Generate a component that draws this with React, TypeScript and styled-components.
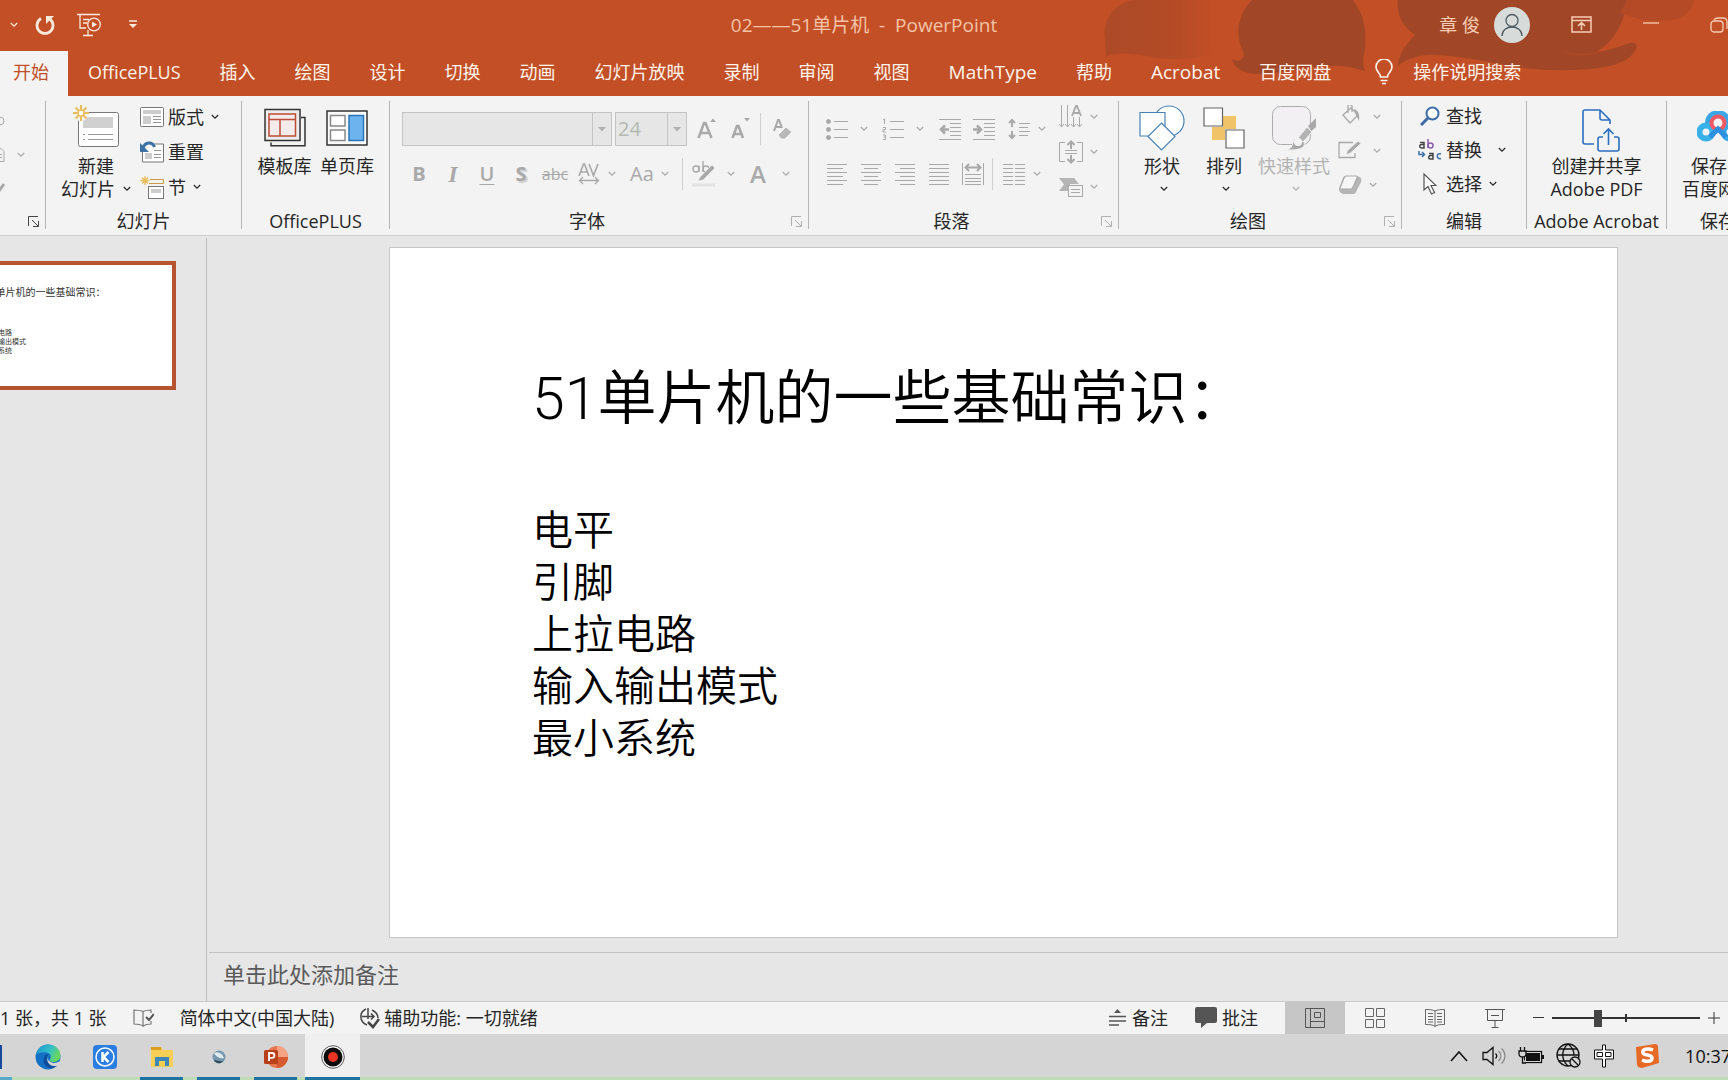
import React from "react";
import styled, { createGlobalStyle, css } from "styled-components";

const FONT = `"Open Sans", "Noto Sans CJK SC", sans-serif`;
const BRAND = "#c24f26";
const GREY = "#a9a9a9";
const INK = "#262626";

const Global = createGlobalStyle`
  * { box-sizing: border-box; }
  body { margin: 0; font-family: ${FONT}; color: ${INK}; background: #e6e6e6; }
  button, select, input, textarea { font: inherit; color: inherit; }
  svg { display: block; flex: none; }
`;

const bare = css`
  border: 0;
  padding: 0;
  margin: 0;
  background: none;
  cursor: default;
`;

const Window = styled.div`
  display: flex;
  flex-direction: column;
  height: 100vh;
  overflow: hidden;
  font-size: 18px;
  line-height: 22px;
`;

/* ---------- title bar and tabs ---------- */

const Header = styled.header`
  position: relative;
  flex: none;
  background: ${BRAND};
  color: #fbe9dc;
`;

const Swirl = styled.svg`
  position: absolute;
  top: 0;
  right: 0;
`;

const TitleBar = styled.div`
  position: relative;
  display: grid;
  grid-template-columns: 1fr auto 1fr;
  align-items: center;
  height: 51px;
  padding-bottom: 2px;
`;

const QuickAccess = styled.div`
  display: flex;
  align-items: center;
  padding-left: 9px;
`;

const DocTitle = styled.h1`
  margin: 0;
  font-size: 19px;
  font-weight: 400;
  white-space: pre;
  color: #f5c3a6;
`;

const WindowControls = styled.div`
  display: flex;
  align-items: center;
  justify-content: flex-end;
  color: #f8cdb4;
`;

const BarButton = styled.button<{ $w: number }>`
  ${bare}
  display: flex;
  align-items: center;
  justify-content: center;
  width: ${(p) => p.$w}px;
  height: 36px;
`;

const UserButton = styled.button`
  ${bare}
  display: flex;
  align-items: center;
  gap: 14px;
  margin-right: 30px;
`;

const TabBar = styled.nav`
  position: relative;
  display: flex;
  height: 45px;
`;

const Tab = styled.button<{ $active?: boolean; $large?: boolean }>`
  ${bare}
  flex: none;
  padding: 0 19px 4px ${(p) => (p.$active ? 13 : 20)}px;
  white-space: nowrap;
  font-size: ${(p) => (p.$large ? 19 : 18)}px;
  color: ${(p) => (p.$active ? BRAND : "#fff3ea")};
  background: ${(p) => (p.$active ? "#f3f3f3" : "transparent")};
`;

const TellMe = styled.button`
  ${bare}
  display: flex;
  align-items: center;
  gap: 19px;
  padding: 0 0 4px 24px;
  color: #fff3ea;
`;

/* ---------- ribbon ---------- */

const Ribbon = styled.div`
  display: flex;
  flex: none;
  height: 140px;
  overflow: hidden;
  background: #f3f3f3;
  border-bottom: 1px solid #cdcdcd;
`;

const GroupBox = styled.section<{ $w: number }>`
  display: flex;
  flex-direction: column;
  flex: none;
  width: ${(p) => p.$w}px;
`;

const GroupBody = styled.div<{ $left: number; $center?: boolean }>`
  display: flex;
  height: 111px;
  padding-left: ${(p) => p.$left}px;
  justify-content: ${(p) => (p.$center ? "center" : "flex-start")};
`;

const GroupFoot = styled.div`
  display: flex;
  align-items: center;
  height: 28px;
  white-space: nowrap;
`;

const FootLabel = styled.span`
  flex: 1;
  padding-bottom: 1px;
  text-align: center;
`;

const Launcher = styled.button<{ $dark: boolean }>`
  ${bare}
  margin: 0 6px 0 7px;
  color: ${(p) => (p.$dark ? "#444" : "#b0b0b0")};
`;

const Split = styled.i`
  flex: none;
  width: 1px;
  margin: 5px 0 6px;
  background: #b5b5b5;
`;

const BigButton = styled.button<{ $w?: number; $dim?: boolean }>`
  ${bare}
  display: flex;
  flex-direction: column;
  align-items: center;
  width: ${(p) => (p.$w ? `${p.$w}px` : "auto")};
  padding-top: 8px;
  white-space: nowrap;
  color: ${(p) => (p.$dim ? "#b3b3b3" : INK)};
`;

const BigIcon = styled.span`
  display: flex;
  align-items: center;
  justify-content: center;
  height: 48px;
  margin-bottom: 2px;
`;

const Line = styled.span<{ $drop?: boolean }>`
  display: flex;
  align-items: center;
  gap: 8px;
  height: 23px;
  padding-left: ${(p) => (p.$drop ? 4 : 0)}px;
`;

const Stack = styled.div<{ $left?: number; $top?: number; $gap?: number }>`
  display: flex;
  flex-direction: column;
  gap: ${(p) => p.$gap ?? 0}px;
  padding-top: ${(p) => p.$top ?? 4}px;
  padding-left: ${(p) => p.$left ?? 0}px;
`;

const SmallButton = styled.button<{ $gap?: number }>`
  ${bare}
  display: flex;
  align-items: center;
  height: 34px;
  white-space: nowrap;
  > span { margin: 0 ${(p) => p.$gap ?? 7}px 0 4px; }
`;

const SmallIcon = styled.i`
  display: flex;
  justify-content: center;
  width: 24px;
`;

const Rows = styled.div<{ $w?: number }>`
  display: flex;
  flex-direction: column;
  gap: 11px;
  width: ${(p) => (p.$w ? `${p.$w}px` : "auto")};
  padding-top: 16px;
`;

const Row = styled.div`
  display: flex;
  align-items: center;
  height: 34px;
`;

const ToolButton = styled.button<{ $gap?: number }>`
  ${bare}
  display: flex;
  align-items: center;
  height: 34px;
  margin-left: ${(p) => p.$gap ?? 0}px;
  color: ${GREY};
`;

const Slot = styled.i<{ $w: number }>`
  display: flex;
  align-items: center;
  justify-content: center;
  width: ${(p) => p.$w}px;
  font-style: normal;
`;

const Glyph = styled.span<{ $kind?: "b" | "i" | "u" | "s" | "strike" | "case" | "color" }>`
  font-size: 20px;
  font-weight: 700;
  ${(p) => p.$kind === "i" && `font-family: "Liberation Serif", serif; font-style: italic; font-size: 24px;`}
  ${(p) => p.$kind === "u" && `font-weight: 600; text-decoration: underline; text-underline-offset: 3px; text-decoration-thickness: 1px;`}
  ${(p) => p.$kind === "s" && `text-shadow: 2px 2px 1px #cfcfcf;`}
  ${(p) => p.$kind === "strike" && `font-size: 16px; font-weight: 400; text-decoration: line-through;`}
  ${(p) => p.$kind === "case" && `font-weight: 400;`}
  ${(p) => p.$kind === "color" && `font-weight: 600; font-size: 24px;`}
`;

const Rule = styled.i<{ $l: number; $r: number }>`
  width: 1px;
  height: 32px;
  margin: 0 ${(p) => p.$r}px 0 ${(p) => p.$l}px;
  background: #cfcfcf;
`;

const Combo = styled.label<{ $w: number }>`
  display: grid;
  width: ${(p) => p.$w}px;
  height: 34px;
  margin-right: 3px;
  border: 1px solid #c4c4c4;
  background: #e6e6e6;
  select {
    grid-area: 1 / 1;
    appearance: none;
    border: 0;
    padding: 0 22px 0 2px;
    background: none;
    font-size: 20px;
    color: #b4b9b4;
    opacity: 1;
  }
`;

const ComboArrow = styled.i`
  display: flex;
  grid-area: 1 / 1;
  justify-self: end;
  align-items: center;
  justify-content: center;
  width: 19px;
  border-left: 1px solid #c4c4c4;
  pointer-events: none;
`;

/* ---------- workspace ---------- */

const Workspace = styled.main`
  display: flex;
  flex: 1;
  min-height: 0;
`;

const ThumbPanel = styled.aside`
  flex: none;
  width: 207px;
  margin-top: 2px;
  padding-top: 23px;
  overflow: hidden;
  border-right: 1px solid #bdbdbd;
`;

const Thumb = styled.button`
  ${bare}
  display: flex;
  flex-direction: column;
  justify-content: flex-start;
  width: 223px;
  height: 129px;
  margin-left: -47px;
  padding: 22px 0 0 27px;
  border: 4px solid #b65331;
  background: #fff;
  text-align: left;
  color: #333;
`;

const ThumbTitle = styled.span`
  height: 23px;
  font-size: 10px;
  line-height: 10px;
  white-space: nowrap;
`;

const ThumbLine = styled.span`
  font-size: 7px;
  line-height: 9px;
`;

const Editor = styled.div`
  display: flex;
  flex: 1;
  flex-direction: column;
  min-width: 0;
`;

const Stage = styled.div`
  flex: 1;
  min-height: 0;
  padding: 11px 110px 0 182px;
  overflow: hidden;
`;

const Slide = styled.article`
  aspect-ratio: 16 / 9;
  padding: 109px 142px;
  border: 1px solid #c6c6c6;
  background: #fff;
  color: #000;
  font-family: Roboto, "Noto Sans CJK SC", sans-serif;
  font-weight: 350;
`;

const SlideTitle = styled.h2`
  margin: 0 0 64px;
  font-size: 59px;
  font-weight: inherit;
  line-height: 84px;
  white-space: nowrap;
`;

const SlideLine = styled.p`
  margin: 0;
  font-size: 41px;
  line-height: 52px;
`;

const Notes = styled.input`
  flex: none;
  height: 49px;
  margin-left: 2px;
  padding: 0 14px 6px;
  border: 0;
  border-top: 1px solid #c4c4c4;
  background: none;
  font-size: 22px;
  outline: none;
  &::placeholder { color: #5a5a5a; opacity: 1; }
`;

/* ---------- status bar ---------- */

const StatusBar = styled.footer`
  display: flex;
  flex: none;
  align-items: center;
  justify-content: space-between;
  height: 33px;
  border-top: 1px solid #c9c9c9;
  background: #f3f3f3;
  white-space: nowrap;
`;

const StatusSide = styled.div<{ $gap: number }>`
  display: flex;
  align-items: center;
  gap: ${(p) => p.$gap}px;
`;

const StatusButton = styled.button`
  ${bare}
  display: flex;
  align-items: center;
  gap: 4px;
  height: 32px;
  padding-bottom: 1px;
`;

const Views = styled.div`
  display: flex;
`;

const ViewButton = styled.button<{ $on?: boolean }>`
  ${bare}
  display: flex;
  align-items: center;
  justify-content: center;
  width: 60px;
  height: 32px;
  background: ${(p) => (p.$on ? "#c6c6c6" : "none")};
`;

const ZoomBox = styled.div`
  display: flex;
  align-items: center;
  gap: 8px;
  padding: 0 8px;
`;

const ZoomSlider = styled.input`
  appearance: none;
  width: 148px;
  height: 18px;
  margin: 0;
  background:
    linear-gradient(#333, #333) center / 148px 2px no-repeat,
    linear-gradient(#333, #333) center / 2px 8px no-repeat;
  &::-webkit-slider-thumb {
    appearance: none;
    width: 8px;
    height: 17px;
    background: #444;
  }
`;

/* ---------- taskbar ---------- */

const Taskbar = styled.div`
  display: flex;
  flex: none;
  justify-content: space-between;
  height: 46px;
  border-bottom: 3px solid #bfdcb6;
  background: #d5d5d5;
`;

const Apps = styled.div`
  display: flex;
  gap: 14px;
`;

const AppButton = styled.button<{ $line?: string }>`
  ${bare}
  display: flex;
  align-items: center;
  justify-content: center;
  width: 43px;
  height: 46px;
  padding-top: 2px;
  border-bottom: 3px solid ${(p) => p.$line ?? "#bfdcb6"};
`;

const EdgeAppButton = styled(AppButton)`
  justify-content: flex-start;
  width: 12px;
`;

const OpenAppButton = styled(AppButton)`
  width: 55px;
  margin-left: -6px;
  background: #f0f0f0;
`;

const Tray = styled.div`
  display: flex;
  align-items: center;
  gap: 12px;
  margin-right: -3px;
  color: #111;
`;

const InputMethod = styled.span`
  padding-left: 8px;
`;

const Clock = styled.time`
  padding-left: 14px;
`;

/* ---------- small drawing helpers ---------- */

type IconProps = { w: number; h: number; children: React.ReactNode; sw?: number; box?: string };
const Icon = ({ w, h, children, sw = 1, box }: IconProps) => (
  <svg width={w} height={h} viewBox={box ?? `0 0 ${w} ${h}`} fill="none" stroke="currentColor" strokeWidth={sw} aria-hidden="true">
    {children}
  </svg>
);

const Chevron = () => (
  <Icon w={8} h={6} sw={1.2}><path d="M.8 1 4 4.2 7.2 1" /></Icon>
);

const Hairlines = ({ rows }: { rows: [number, number][] }) => (
  <Icon w={22} h={22}>
    {rows.map(([a, b], i) => <path key={i} d={`M${a} ${i * 4 + 1.5}H${b}`} />)}
  </Icon>
);

type ToolProps = { label: string; gap?: number; chev?: number; children: React.ReactNode };
const Tool = ({ label, gap, chev, children }: ToolProps) => (
  <ToolButton aria-label={label} $gap={gap}>
    <Slot $w={34}>{children}</Slot>
    {chev ? <Slot $w={chev}><Chevron /></Slot> : null}
  </ToolButton>
);

type GroupProps = { w: number; label?: string; left?: number; center?: boolean; launcher?: "dark" | "light"; children: React.ReactNode };
const Group = ({ w, label, left = 0, center, launcher, children }: GroupProps) => (
  <GroupBox $w={w}>
    <GroupBody $left={left} $center={center}>{children}</GroupBody>
    <GroupFoot>
      <FootLabel>{label}</FootLabel>
      {launcher && (
        <Launcher $dark={launcher === "dark"} aria-label={`${label ?? "剪贴板"}选项`}>
          <Icon w={11} h={11}><path d="M.5 10V.5H10M4 4l6 6M10.500 5v5.500H5" /></Icon>
        </Launcher>
      )}
    </GroupFoot>
  </GroupBox>
);

/* ---------- icons ---------- */

const NewSlideIcon = () => (
  <Icon w={48} h={46}>
    <rect x="6.500" y="7.500" width="40" height="34" rx="2" fill="#fff" stroke="#777" />
    <path d="M11 12h30v11H11z" fill="#d0d0d0" stroke="none" />
    <path d="M11 29.500h2M16 29.500h25M11 34.500h2M16 34.500h25" stroke="#999" />
    <circle cx="9" cy="8" r="8" fill="#f3f3f3" stroke="none" />
    <g stroke="#e9bd5c" strokeWidth="2"><path d="M9 0v5M9 11v5M1 8h5M12 8h5M3.500 2.500l3.300 3.300M11.200 10.200l3.300 3.300M14.500 2.500l-3.300 3.300M6.800 10.200l-3.300 3.300" /><circle cx="9" cy="8" r="3" fill="#fff" strokeWidth="1.500" /></g>
  </Icon>
);
const LayoutIcon = () => (
  <Icon w={24} h={20}>
    <rect x=".5" y=".5" width="23" height="19" rx="1" fill="#fff" stroke="#777" />
    <path d="M3 3h18v4H3zM3 9h8v8H3z" fill="#cdcdcd" stroke="none" />
    <path d="M13 9.500h8M13 12.500h8M13 15.500h8" stroke="#999" />
  </Icon>
);
const ResetIcon = () => (
  <Icon w={24} h={22}>
    <path d="M2.500 11v10h21v-18H14" fill="#fff" stroke="#777" />
    <path d="M5 12h7v6H5z" fill="#cdcdcd" stroke="none" />
    <path d="M14 9.500h7M14 13.500h7M14 16.500h7" stroke="#999" />
    <path d="M3 7C5 1 12 0 14.500 6" stroke="#3d72a4" strokeWidth="3" /><path d="M0 2v9h9z" fill="#3d72a4" stroke="none" />
  </Icon>
);
const SectionIcon = () => (
  <Icon w={24} h={24}>
    <path d="M10 4.500h13.500v4H9" stroke="#c99a45" />
    <path d="M5 1v9M.5 5.500h9M2 2.500l6 6M8 2.500l-6 6" stroke="#e9bd5c" strokeWidth="1.300" />
    <rect x="8.500" y="11.500" width="15" height="12" fill="#fff" stroke="#777" /><path d="M11 14h10v4H11z" fill="#cdcdcd" stroke="none" />
  </Icon>
);
const TemplatesIcon = () => (
  <Icon w={42} h={40} sw={1.500}>
    <path d="M7 34.500v3.300h34V9.500h-4" stroke="#333" /><rect x="1" y="1.500" width="35" height="31" fill="#ececec" stroke="#333" />
    <rect x="5" y="6" width="26.500" height="22" fill="#f3ecea" stroke="#bd4b38" /><path d="M5 11.500h26.500M16 11.500V28" stroke="#bd4b38" />
  </Icon>
);
const PagesIcon = () => (
  <Icon w={42} h={38} sw={1.500}>
    <rect x="1" y="2" width="40" height="34" fill="#fafafa" stroke="#333" />
    <rect x="4.500" y="6.500" width="14.500" height="10.500" fill="#fff" stroke="#888" /><rect x="4.500" y="21" width="14.500" height="10.500" fill="#fff" stroke="#888" />
    <rect x="23" y="6.500" width="14.500" height="25" fill="#6db4ee" stroke="#2874b8" />
  </Icon>
);
const ShapesIcon = () => (
  <Icon w={46} h={46} sw={1.200}>
    <circle cx="30" cy="16" r="15" fill="#fff" stroke="#4a83b3" /><path d="M1 7.500h25V31H1z" fill="#fff" stroke="#4a83b3" />
    <path d="m22.500 18 13.500 13.500-13.500 13.500L9 31.500z" fill="#fff" stroke="#4a83b3" />
  </Icon>
);
const ArrangeIcon = () => (
  <Icon w={42} h={42} sw={1.200}>
    <path d="M20 9h13v13H20zM9 20h13v13H9z" fill="#f0c368" stroke="none" />
    <path d="M1 1h18.500v18H1zM23 23h18v18H23z" fill="#fff" stroke="#666" />
  </Icon>
);
const StyleIcon = () => (
  <Icon w={46} h={46}>
    <rect x="1.500" y="1.500" width="38" height="38" rx="8" fill="#f3f0f4" stroke="#adadad" />
    <path d="M12 45c8 0 9-3 10-8 1-4 7-5 10-2 3 4 1 8-4 9-5 1.500-10 1-16 1z" fill="#a9a9a9" stroke="#f3f3f3" />
    <path d="M27 33 36 22l5 5-9 10z" fill="#b3b3b3" stroke="#f3f3f3" /><path d="m37 21 8-8v9l-4.500 4z" fill="#a9a9a9" stroke="none" />
    <circle cx="27" cy="37" r="4" fill="#f3f3f3" stroke="none" />
  </Icon>
);
const PdfIcon = () => (
  <Icon w={50} h={48} sw={1.600} box="-10 -4 50 48">
    <path d="M13 36H4a2 2 0 0 1-2-2V4a2 2 0 0 1 2-2h15l10 10v4M19 2v8a2 2 0 0 0 2 2h8" stroke="#2b6fc0" />
    <path d="M22 29h-3a2 2 0 0 0-2 2v10a2 2 0 0 0 2 2h17a2 2 0 0 0 2-2V31a2 2 0 0 0-2-2h-3M27.500 37V21M22.500 26l5-5 5 5" stroke="#2b6fc0" />
  </Icon>
);
const NetdiskIcon = () => (
  <Icon w={42} h={34} sw={6}>
    <circle cx="9" cy="21" r="6.500" stroke="#38b0e8" /><circle cx="33" cy="21" r="6.500" stroke="#38a8e8" />
    <path d="M10.500 12a10.500 10.500 0 0 1 21 0" stroke="#3aa6e8" strokeWidth="5" /><circle cx="21" cy="12" r="6.500" stroke="#ee5a63" strokeWidth="4" />
    <path d="m13 26 8-8 8 8" stroke="#2d8fe0" strokeWidth="5" />
  </Icon>
);

/* ---------- sections ---------- */

const HeaderArt = () => (
  <Swirl width="628" height="96" viewBox="0 0 628 96" aria-hidden="true">
    <defs>
      <linearGradient id="fadeRight" x1="0" x2="1" y1="0" y2="0">
        <stop offset="0" stopColor="#ad4a27" /><stop offset=".6" stopColor="#b24b26" /><stop offset="1" stopColor={BRAND} />
      </linearGradient>
    </defs>
    <path d="M22 4C8 12 2 26 5 40l1 17c10-5 26-4 46 0 24 4 46 2 60-4V0H34c-4 0-8 2-12 4z" fill="url(#fadeRight)" />
    <path d="M152 0c-14 14-18 34-8 54-2 8-6 8-12 5 2 10 14 16 30 15 26-1 42-8 68-8 14-1 24 2 35 5-3-8-2-14 0-22 2-20-2-36-12-49z" fill="#a14727" />
    <path d="M298 0c-2 14 4 26 17 35-8 8-16 18-17 31 10-8 22-12 40-11 40 2 70 14 112 15 44 1 78-3 86-21 2-5-1-7-6-6-10 3-18 7-34 9 18-10 28-28 31-52z" fill="#a14727" />
    <path d="M520 12c14 8 34 10 52 8 14-2 20-10 22-20h-66z" fill="#b44b26" />
    <path d="M464 52c14 4 26 3 38-1" stroke="#b24b26" fill="none" />
  </Swirl>
);

const tabs: { name: string; large?: boolean }[] = [
  { name: "OfficePLUS" },
  { name: "插入" },
  { name: "绘图" },
  { name: "设计" },
  { name: "切换" },
  { name: "动画" },
  { name: "幻灯片放映" },
  { name: "录制" },
  { name: "审阅" },
  { name: "视图" },
  { name: "MathType", large: true },
  { name: "帮助" },
  { name: "Acrobat", large: true },
  { name: "百度网盘" },
];

const Top = () => (
  <Header>
    <HeaderArt />
    <TitleBar>
      <QuickAccess>
        <BarButton $w={10} aria-label="撤消选项"><Chevron /></BarButton>
        <BarButton $w={52} aria-label="重复">
          <Icon w={20} h={22} sw={2.800}><path d="M6 4.500A8 8 0 1 0 14 4.500" /><path d="M19 2h-8v8z" fill="currentColor" stroke="none" /></Icon>
        </BarButton>
        <BarButton $w={36} aria-label="从头开始">
          <Icon w={24} h={24} sw={1.300}><path d="M0 1.500h23M3 2v13h6M6 6.500h6M6 10h4M11 17v5M6 22.500h10" /><circle cx="17" cy="11.500" r="6.300" /><path d="M15 8.500v6l5-3z" fill="currentColor" stroke="none" /></Icon>
        </BarButton>
        <BarButton $w={52} aria-label="自定义快速访问工具栏">
          <Icon w={8} h={9} sw={1.500}><path d="M0 1h8" /><path d="M0 4h8L4 8z" fill="currentColor" stroke="none" /></Icon>
        </BarButton>
      </QuickAccess>
      <DocTitle>{"02——51单片机  -  PowerPoint"}</DocTitle>
      <WindowControls>
        <UserButton>
          <span>章 俊</span>
          <Icon w={36} h={36} sw={1.300}><circle cx="18" cy="18" r="18" fill="#d7dcdb" stroke="none" /><g stroke="#4d5a60"><circle cx="18" cy="13.500" r="6" /><path d="M8 29c0-12 20-12 20 0" /></g></Icon>
        </UserButton>
        <BarButton $w={42} aria-label="功能区显示选项">
          <Icon w={21} h={17} sw={1.500}><path d="M1 1h19v15H1zM1 4.500h19M10.500 14V7M7 10l3.500-3.500L14 10" /></Icon>
        </BarButton>
        <BarButton $w={108} aria-label="最小化"><Icon w={28} h={10} sw={1.300}><path d="M1 3h16" /></Icon></BarButton>
        <BarButton $w={18} aria-label="向下还原">
          <Icon w={18} h={16} sw={1.300}><rect x="1" y="4" width="12" height="11" rx="3" /><path d="M4 3c1-2 2-2 4-2h5c3 0 4 1 4 4v7" /></Icon>
        </BarButton>
      </WindowControls>
    </TitleBar>
    <TabBar>
      <Tab $active>开始</Tab>
      {tabs.map((t) => <Tab key={t.name} $large={t.large}>{t.name}</Tab>)}
      <TellMe>
        <Icon w={20} h={26} sw={1.600}><path d="M6.500 18c0-4-4.500-5-4.500-10a8 8 0 0 1 16 0c0 5-4.500 6-4.500 10zM6.500 21.500h7M8 24.500h4" /></Icon>
        操作说明搜索
      </TellMe>
    </TabBar>
  </Header>
);

const ClipboardGroup = () => (
  <Group w={45} launcher="dark">
    <Stack $top={8}>
      <ToolButton aria-label="剪切"><Icon w={6} h={12}><circle cx="0" cy="6" r="4" /></Icon></ToolButton>
      <ToolButton aria-label="复制"><Icon w={6} h={16}><path d="M-1 1.500h2l3 3v10h-5M-1 7.500h3M-1 10.500h3" /></Icon><Slot $w={30}><Chevron /></Slot></ToolButton>
      <ToolButton aria-label="格式刷"><Icon w={6} h={14} sw={3}><path d="m-1 9 5-7" /></Icon></ToolButton>
    </Stack>
  </Group>
);

const SlidesGroup = () => (
  <Group w={195} label="幻灯片" left={10}>
    <BigButton $w={80}>
      <BigIcon><NewSlideIcon /></BigIcon>
      <Line>新建</Line>
      <Line>幻灯片 <Chevron /></Line>
    </BigButton>
    <Stack $left={4} $gap={1}>
      <SmallButton><SmallIcon><LayoutIcon /></SmallIcon><span>版式</span><Chevron /></SmallButton>
      <SmallButton><SmallIcon><ResetIcon /></SmallIcon><span>重置</span></SmallButton>
      <SmallButton><SmallIcon><SectionIcon /></SmallIcon><span>节</span><Chevron /></SmallButton>
    </Stack>
  </Group>
);

const FontGroup = () => (
  <Group w={418} label="字体" left={12} launcher="light">
    <Rows>
      <Row>
        <Combo $w={210}>
          <select disabled aria-label="字体"><option /></select>
          <ComboArrow><Icon w={8} h={5}><path d="M0 0h8L4 4.500z" fill="#b0b0b0" stroke="none" /></Icon></ComboArrow>
        </Combo>
        <Combo $w={72}>
          <select disabled aria-label="字号"><option>24</option></select>
          <ComboArrow><Icon w={8} h={5}><path d="M0 0h8L4 4.500z" fill="#b0b0b0" stroke="none" /></Icon></ComboArrow>
        </Combo>
        <Tool label="增大字号"><Icon w={20} h={22} sw={2.600}><path d="m1.500 20 5.500-15h1.500l6 15M4 15h8.500" /><path d="m13 4 3-3.500L19 4z" fill="currentColor" stroke="none" /></Icon></Tool>
        <Tool label="减小字号"><Icon w={20} h={22} sw={2.600}><path d="M1.500 20 6 8h1.500L12 20M3.500 16h7" /><path d="m13 0 3 3.500L19 0z" fill="currentColor" stroke="none" /></Icon></Tool>
        <Rule $l={2} $r={5} />
        <Tool label="清除格式"><Icon w={20} h={22} sw={2}><path d="m1 13 4-11h1l3 8M3 9h5" /><path d="m5 17 8-8 6 5-7 7H8z" fill="#b9b9b9" stroke="#f3f3f3" strokeWidth="1" /></Icon></Tool>
      </Row>
      <Row>
        <Tool label="加粗"><Glyph>B</Glyph></Tool>
        <Tool label="倾斜"><Glyph $kind="i">I</Glyph></Tool>
        <Tool label="下划线"><Glyph $kind="u">U</Glyph></Tool>
        <Tool label="文字阴影"><Glyph $kind="s">S</Glyph></Tool>
        <Tool label="删除线"><Glyph $kind="strike">abc</Glyph></Tool>
        <Tool label="字符间距" chev={12}><Icon w={22} h={22} sw={1.700}><path d="m1 13 4.500-12h1L11 13M3 9h6.500M11 1l4.500 11.500L20 1" /><path d="M1.500 17.500h19M5 14l-3.500 3.500L5 21M17 14l3.500 3.500L17 21" strokeWidth="1.300" /></Icon></Tool>
        <Tool label="更改大小写" chev={12} gap={7}><Glyph $kind="case">Aa</Glyph></Tool>
        <Rule $l={11} $r={4} />
        <Tool label="突出显示颜色" chev={20}>
          <Icon w={24} h={26} sw={1.400}><circle cx="4" cy="8" r="3" /><path d="M7 4.500V11M11 0v11" /><circle cx="14" cy="8" r="3" /><path d="m20 4 3 3-12 12-5 1 2-4z" fill="currentColor" stroke="#f3f3f3" strokeWidth=".6" /><path d="M0 24h23" stroke="#e2e2e2" strokeWidth="3" /></Icon>
        </Tool>
        <Tool label="字体颜色" chev={22}><Glyph $kind="color">A</Glyph></Tool>
      </Row>
    </Rows>
  </Group>
);

const full: [number, number] = [1, 21];
const ParagraphGroup = () => (
  <Group w={309} label="段落" left={11} launcher="light">
    <Rows $w={234}>
      <Row>
        <Tool label="项目符号" chev={20}><Icon w={22} h={22}><path d="M8 3.500h14M8 11.500h14M8 19.500h14" /><g fill="currentColor"><circle cx="2.500" cy="3.500" r="2" /><circle cx="2.500" cy="11.500" r="2" /><circle cx="2.500" cy="19.500" r="2" /></g></Icon></Tool>
        <Tool label="编号" chev={20} gap={2}><Icon w={22} h={22}><path d="M8 3.500h14M8 11.500h14M8 19.500h14M1 2l1.500-1v5M1 9.500h2.500v2H1V14h3M1 17h2.500v4.500H1M1.500 19h2" /></Icon></Tool>
        <Tool label="减少缩进" gap={3}><Icon w={22} h={22}><path d="M0 1.500h22M11 5.500h11M11 9.500h11M11 13.500h11M11 17.500h11M0 21.500h22" /><path d="M10 11.500H2M6 7.500l-4 4 4 4" strokeWidth="2.500" /></Icon></Tool>
        <Tool label="增加缩进"><Icon w={22} h={22}><path d="M0 1.500h22M11 5.500h11M11 9.500h11M11 13.500h11M11 17.500h11M0 21.500h22" /><path d="M0 11.500h8M4 7.500l4 4-4 4" strokeWidth="2.500" /></Icon></Tool>
        <Tool label="行距" chev={12} gap={1}><Icon w={22} h={22}><path d="M11 5.500h11M11 9.500h9M11 13.500h11M11 17.500h9" /><path d="M4 9V2M1 5l3-3 3 3M4 13v7M1 17l3 3 3-3" strokeWidth="2" /></Icon></Tool>
      </Row>
      <Row>
        <Tool label="左对齐"><Hairlines rows={[full, [1, 17], full, [1, 17], full, [1, 17]]} /></Tool>
        <Tool label="居中"><Hairlines rows={[full, [4, 18], full, [4, 18], full, [4, 18]]} /></Tool>
        <Tool label="右对齐"><Hairlines rows={[full, [6, 21], full, [6, 21], full, [6, 21]]} /></Tool>
        <Tool label="两端对齐"><Hairlines rows={[full, full, full, full, full, full]} /></Tool>
        <Tool label="分散对齐"><Icon w={22} h={24}><path d="M.5 1v22M21.500 1v22M3 12.500h16M3 16.500h16M3 19.500h16M3 22.500h16" /><path d="M3 5.500h16M7 2 3.500 5.500 7 9M15 2l3.500 3.500L15 9" strokeWidth="2" /></Icon></Tool>
        <Rule $l={2} $r={4} />
        <Tool label="分栏" chev={12}><Icon w={22} h={22}>{[0, 1, 2, 3, 4, 5].map((i) => <path key={i} d={`M0 ${i * 4 + 1.5}h10M12 ${i * 4 + 1.5}h10`} />)}</Icon></Tool>
      </Row>
    </Rows>
    <Stack $gap={1}>
      <Tool label="文字方向" chev={12}><Icon w={24} h={24}><path d="M2.500 0v22M8.500 0v22M14.500 12v10M20.500 12v10M0 19l2.500 3L5 19M6 19l2.500 3 2.500-3M12 19l2.500 3 2.500-3M18 19l2.500 3 2.500-3" /><path d="m13 11 4-10h1l4 10M14.500 8h6" strokeWidth="1.800" /></Icon></Tool>
      <Tool label="对齐文本" chev={12}><Icon w={24} h={24}><path d="M6 2.500H.5v19H6M18 2.500h5.500v19H18M6 10.500h12M6 13.500h12" /><path d="M12 9V2M8.500 5 12 1.500 15.500 5M12 15v7M8.500 19l3.500 3.500 3.500-3.500" strokeWidth="2" /></Icon></Tool>
      <Tool label="转换为 SmartArt" chev={12}><Icon w={24} h={20}><path d="M0 1h15l5 6h-9v7H0l5-6.500z" fill="#b5b5b5" stroke="none" /><rect x="9.500" y="8.500" width="14" height="11" fill="#f3f3f3" /><path d="M12 12.500h9M12 15.500h9" /></Icon></Tool>
    </Stack>
  </Group>
);

const DrawingGroup = () => (
  <Group w={282} label="绘图" left={12} launcher="light">
    <BigButton $w={62}><BigIcon><ShapesIcon /></BigIcon><Line>形状</Line><Line $drop><Chevron /></Line></BigButton>
    <BigButton $w={62}><BigIcon><ArrangeIcon /></BigIcon><Line>排列</Line><Line $drop><Chevron /></Line></BigButton>
    <BigButton $w={78} $dim><BigIcon><StyleIcon /></BigIcon><Line>快速样式</Line><Line $drop><Chevron /></Line></BigButton>
    <Stack $top={4}>
      <Tool label="形状填充" chev={20}><Icon w={22} h={24} sw={1.300}><path d="m4 10 8-7 7 7-8 8z" /><path d="M9 8V1c0-2 4-2 4 0v6" /><path d="M15 4c4 1 6 5 5 12l-3-6z" fill="currentColor" stroke="none" /></Icon></Tool>
      <Tool label="形状轮廓" chev={20}><Icon w={24} h={20} sw={1.300}><path d="M15 1.500H1v15h16V12" /><path d="m8 14 1.500-4.500L20 0l3 2.500L12.500 12z" fill="currentColor" stroke="#f3f3f3" strokeWidth=".8" /></Icon></Tool>
      <Tool label="形状效果" chev={12}><Icon w={24} h={20} sw={1.200}><path d="M1 14 5 3c.5-1 1-2 2-2h12c4 1 5 3 4 6l-5 10c-1 2-2 2-4 2H5c-3-1-4-3-4-5z" fill="#b5b5b5" stroke="none" /><path d="m2 13 4-10c.5-1.500 1-2 2-2h10c1 0 1.500.5 1 2l-4 9c-.5 1.500-1 2-2 2H3c-1 0-1.500 0-1-1z" fill="#f6f6f6" /></Icon></Tool>
    </Stack>
  </Group>
);

const EditGroup = () => (
  <Group w={124} label="编辑" left={16}>
    <Stack $top={3}>
      <SmallButton><SmallIcon><Icon w={20} h={20} sw={2}><circle cx="12.500" cy="7.500" r="6" fill="#fff" stroke="#3d6ca5" /><path d="m8 12-7 7" stroke="#3d6ca5" strokeWidth="3" /></Icon></SmallIcon><span>查找</span></SmallButton>
      <SmallButton $gap={16}>
        <SmallIcon>
          <Icon w={24} h={22} sw={1.500}>
            <g stroke="#444"><path d="M2 3.500h4V9H3.500a1.500 1.500 0 0 1 0-3.500H6M11 14.500h4V20h-2.500a1.500 1.500 0 0 1 0-3.500H15" /></g>
            <path d="M10 0v9" stroke="#8d5ca8" /><circle cx="12.500" cy="6.500" r="2.500" stroke="#8d5ca8" />
            <path d="M23 15c-5-2-5 6 0 4.500M1 12v3.500h5M4 13l2.500 2.500L4 18" stroke="#3d72a4" />
          </Icon>
        </SmallIcon>
        <span>替换</span><Chevron />
      </SmallButton>
      <SmallButton><SmallIcon><Icon w={14} h={22} sw={1.200}><path d="M1 1v16l4-3.500 3.500 7.500 3-1.500L8 12.500h5z" fill="#fff" stroke="#555" /></Icon></SmallIcon><span>选择</span><Chevron /></SmallButton>
    </Stack>
  </Group>
);

const notes = ["电平", "引脚", "上拉电路", "输入输出模式", "最小系统"];
const heading = "51单片机的一些基础常识：";

export default function App() {
  return (
    <Window>
      <Global />
      <Top />
      <Ribbon>
        <ClipboardGroup />
        <Split />
        <SlidesGroup />
        <Split />
        <Group w={147} label="OfficePLUS" left={11}>
          <BigButton $w={63}><BigIcon><TemplatesIcon /></BigIcon><Line>模板库</Line></BigButton>
          <BigButton $w={62}><BigIcon><PagesIcon /></BigIcon><Line>单页库</Line></BigButton>
        </Group>
        <Split />
        <FontGroup />
        <Split />
        <ParagraphGroup />
        <Split />
        <DrawingGroup />
        <Split />
        <EditGroup />
        <Split />
        <Group w={139} label="Adobe Acrobat" center>
          <BigButton><BigIcon><PdfIcon /></BigIcon><Line>创建并共享</Line><Line>Adobe PDF</Line></BigButton>
        </Group>
        <Split />
        <Group w={102} label="保存" center>
          <BigButton><BigIcon><NetdiskIcon /></BigIcon><Line>保存到</Line><Line>百度网盘</Line></BigButton>
        </Group>
      </Ribbon>

      <Workspace>
        <ThumbPanel>
          <Thumb aria-label="幻灯片 1">
            <ThumbTitle>{heading}</ThumbTitle>
            {notes.map((n) => <ThumbLine key={n}>{n}</ThumbLine>)}
          </Thumb>
        </ThumbPanel>
        <Editor>
          <Stage>
            <Slide>
              <SlideTitle>{heading}</SlideTitle>
              {notes.map((n) => <SlideLine key={n}>{n}</SlideLine>)}
            </Slide>
          </Stage>
          <Notes aria-label="备注" placeholder="单击此处添加备注" />
        </Editor>
      </Workspace>

      <StatusBar>
        <StatusSide $gap={26}>
          <StatusButton>1 张，共 1 张</StatusButton>
          <StatusButton aria-label="拼写检查"><Icon w={21} h={18} sw={1.200}><path d="M10 2.500C7 1 4 1 1 1v14c3 0 6 0 9 2zM10 2.500C13 1 16 1 18 1v3M10 17c3-2 5-2 8-2v-3" stroke="#777" /><path d="m13 8 3 3 5-6" stroke="#555" strokeWidth="2" /></Icon></StatusButton>
          <StatusButton>简体中文(中国大陆)</StatusButton>
          <StatusButton><Icon w={20} h={22} sw={1.500}><path d="M6 2C-1 5-1 15 7 18M8 1v11M2 9.500h11M11 6.500l3 3-3 3M12 3c4 2 6 4 6 8" stroke="#444" /><path d="m8 15 5 5 6-8" stroke="#444" strokeWidth="2.500" /></Icon>辅助功能: 一切就绪</StatusButton>
        </StatusSide>
        <StatusSide $gap={27}>
          <StatusButton><Icon w={20} h={17} sw={1.400}><path d="M1 7.500h17M1 12h17M1 16h10" stroke="#555" /><path d="m6 4 3.500-4L13 4z" fill="#555" stroke="none" /></Icon>备注</StatusButton>
          <StatusButton><Icon w={23} h={21}><path d="M2 0h18a2 2 0 0 1 2 2v12a2 2 0 0 1-2 2H12l-6 5v-5H2a2 2 0 0 1-2-2V2a2 2 0 0 1 2-2z" fill="#555" stroke="none" /></Icon>批注</StatusButton>
          <StatusSide $gap={0}>
            <Views>
              <ViewButton $on aria-label="普通视图"><Icon w={20} h={20}><path d="M.5.5h19v19H.5zM5.500 1v18M5.500 13.500h14M9.500 4.500h6v5h-6z" stroke="#555" /></Icon></ViewButton>
              <ViewButton aria-label="幻灯片浏览"><Icon w={20} h={20}><path d="M.5.5h8v8h-8zM11.500.5h8v8h-8zM.5 11.500h8v8h-8zM11.500 11.500h8v8h-8z" stroke="#666" /></Icon></ViewButton>
              <ViewButton aria-label="阅读视图"><Icon w={20} h={18}><path d="M10 2C7 .5 4 .5.500.500v15c4 0 7 0 9.500 2 2.500-2 5.500-2 9.500-2V.500C16 .5 13 .5 10 2zv15M3 4.500h5M3 7.500h5M3 10.500h5M3 13h5M12 4.500h5M12 7.500h5M12 10.500h5M12 13h5" stroke="#666" /></Icon></ViewButton>
              <ViewButton aria-label="幻灯片放映"><Icon w={20} h={20}><path d="M0 1.500h20M2.500 2v10.500h15V2M6 7.500h8M10 13v6M6.500 19.500h7" stroke="#555" /></Icon></ViewButton>
            </Views>
            <ZoomBox>
              <StatusButton aria-label="缩小"><Icon w={11} h={11}><path d="M0 5.500h11" stroke="#333" /></Icon></StatusButton>
              <ZoomSlider type="range" min={0} max={100} defaultValue={30} aria-label="显示比例" />
              <StatusButton aria-label="放大"><Icon w={12} h={12}><path d="M0 6h12M6 0v12" stroke="#333" /></Icon></StatusButton>
            </ZoomBox>
          </StatusSide>
        </StatusSide>
      </StatusBar>

      <Taskbar>
        <Apps>
          <EdgeAppButton $line="#58a9c9" aria-label="应用"><Icon w={2} h={24}><path d="M0 0h2v24H0z" fill="#164b9c" stroke="none" /></Icon></EdgeAppButton>
          <AppButton aria-label="Microsoft Edge">
            <Icon w={26} h={26} box="0 0 24 24">
              <defs><linearGradient id="eg" x1="0" y1="0" x2="1" y2=".4"><stop offset="0" stopColor="#1c8fd0" /><stop offset=".6" stopColor="#34c1c8" /><stop offset="1" stopColor="#6bd65e" /></linearGradient></defs>
              <g stroke="none"><circle cx="12" cy="12" r="11.500" fill="#1470c4" /><path d="M1 10C2 4 7 .5 12 .5c7 0 11.500 5 11.500 10 0 4-3 6-6.500 6-3 0-4-1.500-3-3 2-3-1-6-5-6-4 0-7 1-8 2.500z" fill="url(#eg)" /><path d="M9 11c-3 5 0 12 8 11 2-.5 4-2 5-4-6 3-12 0-11-5 .2-1 .5-2 1.500-3-1.500-.5-2.500 0-3.500 1z" fill="#0d4d9b" /><path d="M12.500 10c-2 3 0 7 4.500 7.500 2 .2 4-.5 5.500-1.500L24 17.500c-1 1-2 2-3 2.500-4 1.500-10-1-9.500-6 .1-1.500.3-2.500 1-4z" fill="#d5d5d5" /></g>
            </Icon>
          </AppButton>
          <AppButton aria-label="K">
            <Icon w={24} h={24}><rect width="24" height="24" rx="4" fill="#2a7de1" stroke="none" /><circle cx="12" cy="12" r="9" stroke="#fff" strokeWidth="1.500" /><path d="M9.500 7v10M15.500 7l-5 5 5 5" stroke="#fff" strokeWidth="2.500" /></Icon>
          </AppButton>
          <AppButton $line="#1f73a0" aria-label="文件资源管理器">
            <Icon w={24} h={22}><g stroke="none"><path d="M1 1h10l2 3h10v17H1z" fill="#f8cf55" /><path d="M1 1h10v3H1z" fill="#dc9c20" /><path d="M5 11h14v9h-4v-5H9v5H5z" fill="#3f86b8" /></g></Icon>
          </AppButton>
          <AppButton $line="#1f73a0" aria-label="地球">
            <Icon w={20} h={20}><g stroke="none"><circle cx="10" cy="10" r="6.500" fill="#7697ad" /><path d="M5 6c4-2 8 0 10 5-4 1-8-1-10-5z" fill="#dfe9ee" /><path d="M5 13c3 0 6 2 9 1-2 3-7 3-9-1z" fill="#2f4758" /></g></Icon>
          </AppButton>
          <AppButton $line="#1f73a0" aria-label="PowerPoint">
            <Icon w={24} h={24}><g stroke="none"><circle cx="13" cy="12" r="11" fill="#e8754d" /><path d="M13 1a11 11 0 0 1 11 11H13z" fill="#f6a383" /><path d="M13 23a11 11 0 0 0 11-11H13z" fill="#d85a30" /><rect y="5" width="14" height="14" rx="1.500" fill="#b8411c" /></g><path d="M5 16V8h3a2.300 2.300 0 0 1 0 4.800H5" stroke="#fff" strokeWidth="1.800" /></Icon>
          </AppButton>
          <OpenAppButton $line="#1f73a0" aria-label="录制">
            <Icon w={24} h={24}><circle cx="12" cy="12" r="11.300" fill="#fff" stroke="#555" /><circle cx="12" cy="12" r="9.500" fill="#0c0c0c" stroke="none" /><circle cx="12" cy="12" r="5" fill="#ea3323" stroke="none" /></Icon>
          </OpenAppButton>
        </Apps>
        <Tray>
          <Icon w={20} h={12} sw={1.500}><path d="m1 11 8-9 8 9" /></Icon>
          <Icon w={24} h={20} sw={1.300}><path d="M1 6.500h4l6-5v17l-6-5H1z" /><path d="M13.500 7.500c1.500 1.500 1.500 3.500 0 5" /><path d="M16.500 5c3 3 3 7 0 10M19.500 2.500c4.500 4 4.500 11 0 15" stroke="#888" /></Icon>
          <Icon w={26} h={18} sw={1.300}><rect x="6.500" y="4.500" width="17" height="11" fill="#f5f5f5" /><path d="M8 6h14v8H8zM24 8h2v4h-2z" fill="#111" stroke="none" /><path d="M1 4h7v3c0 2-1.500 3-3.500 3S1 9 1 7zM2.500 4V0M6.500 4V0M4.500 10v6H8" fill="#d5d5d5" /></Icon>
          <Icon w={25} h={25} sw={1.300}><circle cx="12" cy="12" r="11" /><path d="M1 12h22M3 6h18M3 18h11M12 1C5 7 5 17 12 23M12 1c4 3 6 7 6 11" /><circle cx="19" cy="19" r="5" fill="#d5d5d5" /><path d="m16 16 6 6" /></Icon>
          <Icon w={22} h={24}><path d="M9.500 1h3v5h8v9h-8v8h-3v-8h-8V6h8zM4 8.500h5.500v4H4zM12.500 8.500H18v4h-5.500z" fill="#fff" /></Icon>
          <InputMethod><Icon w={24} h={24}><path d="m1 3 19-3c2 0 3 1 3 3l1 16-17 5c-3 0-4-1-5-3z" fill="#e66a26" stroke="none" /><path d="M18 6c-5-2-11-1-10 3 1 3 9 1 9 5 0 4-6 4-10 2" stroke="#fff" strokeWidth="3.500" /></Icon></InputMethod>
          <Clock>10:37</Clock>
        </Tray>
      </Taskbar>
    </Window>
  );
}
